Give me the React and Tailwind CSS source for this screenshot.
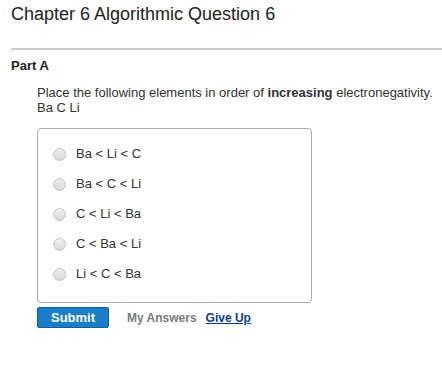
import React from "react";

const options = ["Ba < Li < C", "Ba < C < Li", "C < Li < Ba", "C < Ba < Li", "Li < C < Ba"];

export default function App() {
  return (
    <div className="w-[442px] h-[366px] bg-white text-[#333] font-['Liberation_Sans',Arial,sans-serif]">
      <h1 className="pl-[11px] pt-[2px] text-[18px] leading-[24px] text-[#222]">Chapter 6 Algorithmic Question 6</h1>
      <div className="ml-[11px] mt-[22px] h-[2px] bg-[#cccccc]" />
      <h2 className="pl-[11px] mt-[8px] text-[13px] leading-[16px] font-bold text-[#222]">Part A</h2>
      <div className="pl-[37px] mt-[11px]">
        <p className="text-[13px] leading-[15px]">
          Place the following elements in order of <b>increasing</b> electronegativity.
          <br />
          Ba C Li
        </p>
        <div className="mt-[13px] w-[275px] h-[175px] border border-[#aaaaaa] rounded-[4px] pt-[10px] pl-[15px]">
          {options.map((o) => (
            <label key={o} className="flex items-center h-[30px] text-[13px]">
              <span className="w-[13px] h-[13px] rounded-full border border-[#c6c6c6] bg-gradient-to-b from-[#f0f0f0] to-[#d8d8d8]" />
              <span className="ml-[10px]">{o}</span>
            </label>
          ))}
        </div>
        <div className="flex items-center mt-[4px]">
          <button className="w-[72px] h-[21px] bg-[#1a7dc8] border border-[#11609e] rounded-[2px] text-white text-[13px] font-bold">
            Submit
          </button>
          <span className="ml-[18px] text-[12px] font-bold text-[#7a7a7a]">My Answers</span>
          <a className="ml-[9px] text-[12px] font-bold text-[#0b3d8c] underline">Give Up</a>
        </div>
      </div>
    </div>
  );
}
